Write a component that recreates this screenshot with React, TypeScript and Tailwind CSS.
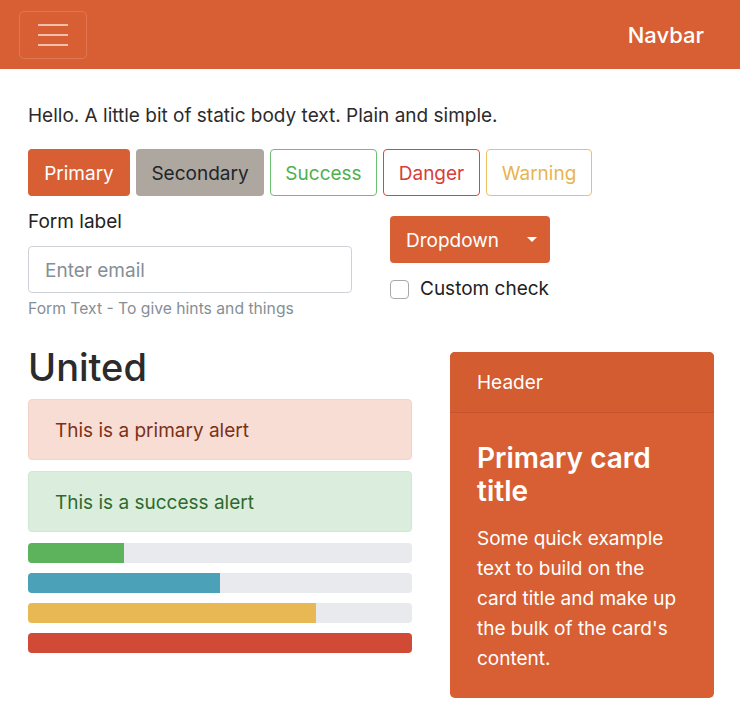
import { useState } from "react";

const FONT = "font-['Inter','Liberation_Sans',sans-serif]";

const Navbar = () => (
	<nav className="flex h-[69px] items-center justify-between bg-[#d75f33]">
		<button
			type="button"
			className="ml-[19px] flex h-[48px] w-[68px] flex-col items-center justify-center gap-[8px] rounded-[5px] border border-white/15"
		>
			<span className="block h-[2px] w-[30px] bg-white/60" />
			<span className="block h-[2px] w-[30px] bg-white/60" />
			<span className="block h-[2px] w-[30px] bg-white/60" />
		</button>
		<span className="mr-[36px] pt-[2px] text-[22px] font-medium text-white">Navbar</span>
	</nav>
);

const ButtonRow = () => (
	<div className="mt-[19px] flex gap-[6px] text-[19px]">
		<button type="button" className="h-[47px] w-[102px] rounded-[4px] bg-[#d75f33] pt-[3px] text-white">
			Primary
		</button>
		<button type="button" className="h-[47px] w-[128px] rounded-[4px] bg-[#aea79f] pt-[3px] text-[#212529]">
			Secondary
		</button>
		<button type="button" className="h-[47px] w-[107px] rounded-[4px] border border-[#6cbf6c] pt-[3px] text-[#4fb04f]">
			Success
		</button>
		<button type="button" className="h-[47px] w-[97px] rounded-[4px] border border-[#d9483d] pt-[3px] text-[#d6403a]">
			Danger
		</button>
		<button type="button" className="h-[47px] w-[106px] rounded-[4px] border border-[#ebc066] pt-[3px] text-[#e8b54f]">
			Warning
		</button>
	</div>
);

const FormRow = () => {
	const [checked, setChecked] = useState(false);

	return (
		<div className="mt-[11px] flex">
			<div className="w-[324px] shrink-0">
				<label className="block pt-[1px] text-[19px] leading-[28px] text-[#222]">Form label</label>
				<input
					type="email"
					placeholder="Enter email"
					className="mt-[10px] block h-[47px] w-full rounded-[4px] border border-[#cfd3d8] px-[16px] pt-[2px] text-[19px] outline-none placeholder:text-[#868e96]"
				/>
				<p className="mt-[5px] text-[15.7px] leading-[22px] text-[#868e96]">
					Form Text - To give hints and things
				</p>
			</div>
			<div className="ml-[38px] pt-[9px]">
				<div className="flex h-[47px] w-[160px] rounded-[4px] bg-[#d75f33] text-white">
					<span className="flex flex-1 items-center pl-[16px] pt-[3px] text-[19px]">Dropdown</span>
					<span className="flex w-[34px] items-center justify-center pr-[2px]">
						<span className="block h-0 w-0 border-x-[5px] border-t-[5px] border-x-transparent border-t-white" />
					</span>
				</div>
				<label className="mt-[14px] flex cursor-pointer items-center gap-[11px] text-[19px] leading-[24px] text-[#222]">
					<span
						onClick={() => setChecked(!checked)}
						className="block h-[19px] w-[19px] rounded-[4px] border border-[#a9a9a9] bg-white"
					/>
					Custom check
				</label>
			</div>
		</div>
	);
};

const progressBars = [
	{ color: "bg-[#5db35b]", width: "25%" },
	{ color: "bg-[#4aa1b8]", width: "50%" },
	{ color: "bg-[#e8b855]", width: "75%" },
	{ color: "bg-[#d04a35]", width: "100%" },
];

const LeftColumn = () => (
	<div className="w-[384px] shrink-0">
		<h1 className="text-[38px] font-medium leading-[46px] text-[#2b2b2b]">United</h1>
		<div className="mt-[9px] flex h-[61px] items-center rounded-[4px] border border-[#f5d3c7] bg-[#f8ddd4] pl-[26px] pt-[3px] text-[19px] text-[#7b3118]">
			This is a primary alert
		</div>
		<div className="mt-[11px] flex h-[61px] items-center rounded-[4px] border border-[#cfe8d2] bg-[#dbeedd] pl-[26px] pt-[3px] text-[19px] text-[#2e6a2e]">
			This is a success alert
		</div>
		<div className="mt-[11px] flex flex-col gap-[10px]">
			{progressBars.map((bar) => (
				<div key={bar.width} className="h-[20px] overflow-hidden rounded-[4px] bg-[#e9eaee]">
					<div className={`h-full ${bar.color}`} style={{ width: bar.width }} />
				</div>
			))}
		</div>
	</div>
);

const PrimaryCard = () => (
	<div className="mt-[8px] w-[264px] overflow-hidden rounded-[5px] bg-[#d75f33] text-white">
		<div className="flex h-[61px] items-center border-b border-[#c5542c] bg-[#d35c31] pl-[27px] pt-[3px] text-[19px]">
			Header
		</div>
		<div className="px-[27px] pb-[24px] pt-[29px]">
			<h4 className="text-[28px] font-semibold leading-[33px]">Primary card title</h4>
			<p className="mt-[16px] text-[19px] leading-[30px]">
				Some quick example text to build on the card title and make up the bulk of the
				card's content.
			</p>
		</div>
	</div>
);

const App = () => {
	return (
		<div className={`min-h-[720px] bg-white ${FONT}`}>
			<Navbar />
			<main className="px-[28px]">
				<p className="pt-[33px] text-[19px] leading-[28px] text-[#2b2b2b]">
					Hello. A little bit of static body text. Plain and simple.
				</p>
				<ButtonRow />
				<FormRow />
				<div className="mt-[24px] flex">
					<LeftColumn />
					<div className="ml-[38px] shrink-0">
						<PrimaryCard />
					</div>
				</div>
			</main>
		</div>
	);
};

export default App;
